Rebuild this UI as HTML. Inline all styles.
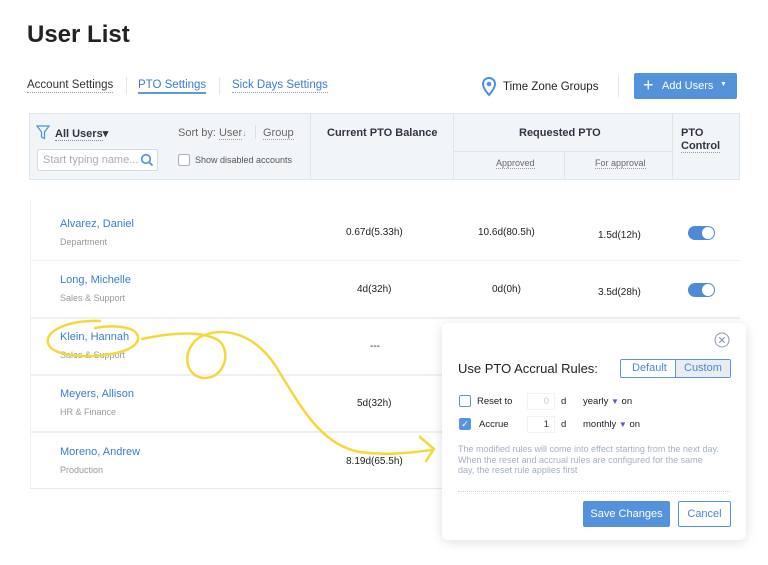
<!DOCTYPE html>
<html><head><meta charset="utf-8"><style>
*{box-sizing:border-box;margin:0;padding:0}
body{width:768px;height:565px;background:#fff;font-family:"Liberation Sans",sans-serif;position:relative;overflow:hidden;color:#333}
.a{position:absolute}
.lnk{color:#3a7bd5}
.t11{font-size:11px}
</style></head><body>
<div class="a" style="left:27px;top:21px;font-size:24px;font-weight:bold;color:#222">User List</div>

<div class="a" style="left:27px;top:79px;font-size:11.5px;color:#333;border-bottom:1px dotted #99a;padding-bottom:1px">Account Settings</div>
<div class="a" style="left:126px;top:77px;width:1px;height:18px;background:#e2e5ea"></div>
<div class="a" style="left:138px;top:79px;font-size:11.5px;color:#3a7bd5;border-bottom:2px solid #5b9be0;padding-bottom:1px">PTO Settings</div>
<div class="a" style="left:219px;top:77px;width:1px;height:18px;background:#e2e5ea"></div>
<div class="a" style="left:232px;top:79px;font-size:11.5px;color:#3a7bd5;border-bottom:1px dotted #7aa6e0;padding-bottom:1px">Sick Days Settings</div>

<svg class="a" style="left:481px;top:77px" width="16" height="20" viewBox="0 0 16 20"><path d="M8 1C4.5 1 2 3.6 2 7c0 4.5 6 11 6 11s6-6.5 6-11c0-3.4-2.5-6-6-6z" fill="none" stroke="#4a90e2" stroke-width="2"/><circle cx="8" cy="7" r="2.3" fill="#4a90e2"/></svg>
<div class="a" style="left:503px;top:81px;font-size:11.5px;color:#222">Time Zone Groups</div>
<div class="a" style="left:618px;top:75px;width:1px;height:22px;background:#e2e5ea"></div>
<div class="a" style="left:634px;top:73px;width:103px;height:26px;background:#5592dc;border-radius:2px;color:#fff;font-size:11px">
<span class="a" style="left:9px;top:2px;font-size:18px;line-height:20px">+</span>
<span class="a" style="left:28px;top:7px">Add Users</span>
<span class="a" style="left:86px;top:8px;font-size:7px">▼</span></div>

<div class="a" style="left:29px;top:113px;width:711px;height:67px;background:#f2f5f8;border:1px solid #e0e5eb"></div>
<div class="a" style="left:310px;top:113px;width:1px;height:67px;background:#e0e5eb"></div>
<div class="a" style="left:453px;top:113px;width:1px;height:67px;background:#e0e5eb"></div>
<div class="a" style="left:672px;top:113px;width:1px;height:67px;background:#e0e5eb"></div>
<div class="a" style="left:453px;top:151px;width:219px;height:1px;background:#e0e5eb"></div>
<div class="a" style="left:564px;top:151px;width:1px;height:29px;background:#e0e5eb"></div>
<svg class="a" style="left:36px;top:125px" width="14" height="15" viewBox="0 0 14 15"><path d="M1 1h12L8.5 7v6.5l-3-1.5V7z" fill="none" stroke="#4a90e2" stroke-width="1.2"/></svg>
<div class="a" style="left:55px;top:127px;font-size:11px;font-weight:bold;color:#334">
<span style="border-bottom:1px dotted #889">All Users</span>▾</div>
<div class="a" style="left:37px;top:149px;width:121px;height:22px;background:#fff;border:1px solid #d3dbe4;border-radius:2px;font-size:11px;color:#aab;padding:4px 5px">Start typing name...</div>
<svg class="a" style="left:140px;top:153px" width="14" height="14" viewBox="0 0 14 14"><circle cx="6" cy="6" r="4.3" fill="none" stroke="#4a90e2" stroke-width="1.6"/><path d="M9 9l3.5 3.5" stroke="#4a90e2" stroke-width="1.8"/></svg>
<div class="a t11" style="left:178px;top:127px;color:#666">Sort by: <span style="border-bottom:1px dotted #99a">User</span><span style="color:#aaa;font-size:9px">↓</span></div>
<div class="a" style="left:255px;top:125px;width:1px;height:14px;background:#dde"></div>
<div class="a t11" style="left:263px;top:127px;color:#666;border-bottom:1px dotted #99a">Group</div>
<div class="a" style="left:178px;top:154px;width:12px;height:12px;border:1px solid #aab;border-radius:2px;background:#fff"></div>
<div class="a" style="left:195px;top:155px;font-size:9px;color:#555">Show disabled accounts</div>
<div class="a t11" style="left:327px;top:127px;font-weight:bold;color:#334">Current PTO Balance</div>
<div class="a t11" style="left:519px;top:127px;font-weight:bold;color:#334">Requested PTO</div>
<div class="a" style="left:496px;top:158px;font-size:9px;color:#666;border-bottom:1px dotted #99a">Approved</div>
<div class="a" style="left:595px;top:158px;font-size:9px;color:#666;border-bottom:1px dotted #99a">For approval</div>
<div class="a t11" style="left:681px;top:127px;font-weight:bold;color:#334;line-height:13px">PTO<br><span style="border-bottom:1px dotted #99a">Control</span></div>

<div class="a" style="left:30px;top:200px;width:1px;height:289px;background:#eef0f3"></div>
<div class="a" style="left:30px;top:488px;width:415px;height:1px;background:#e6e9ee"></div>
<div class="a" style="left:30px;top:260px;width:710px;height:1px;background:#eef0f3"></div>
<div class="a" style="left:30px;top:317px;width:710px;height:2px;background:#eef0f3"></div>
<div class="a" style="left:30px;top:374px;width:415px;height:2px;background:#eef0f3"></div>
<div class="a" style="left:30px;top:431px;width:415px;height:2px;background:#eef0f3"></div>

<div class="a lnk" style="left:60px;top:218px;font-size:11px">Alvarez, Daniel</div>
<div class="a" style="left:60px;top:237px;font-size:9px;color:#999">Department</div>
<div class="a lnk" style="left:60px;top:274px;font-size:11px">Long, Michelle</div>
<div class="a" style="left:60px;top:293px;font-size:9px;color:#999">Sales &amp; Support</div>
<div class="a lnk" style="left:60px;top:331px;font-size:11px">Klein, Hannah</div>
<div class="a" style="left:60px;top:350px;font-size:9px;color:#999">Sales &amp; Support</div>
<div class="a lnk" style="left:60px;top:388px;font-size:11px">Meyers, Allison</div>
<div class="a" style="left:60px;top:407px;font-size:9px;color:#999">HR &amp; Finance</div>
<div class="a lnk" style="left:60px;top:446px;font-size:11px">Moreno, Andrew</div>
<div class="a" style="left:60px;top:465px;font-size:9px;color:#999">Production</div>

<div class="a" style="left:346px;top:227px;font-size:10px;color:#222">0.67d(5.33h)</div>
<div class="a" style="left:357px;top:284px;font-size:10px;color:#222">4d(32h)</div>
<div class="a" style="left:370px;top:341px;font-size:10px;color:#222">---</div>
<div class="a" style="left:357px;top:398px;font-size:10px;color:#222">5d(32h)</div>
<div class="a" style="left:346px;top:456px;font-size:10px;color:#222">8.19d(65.5h)</div>
<div class="a" style="left:478px;top:227px;font-size:10px;color:#222">10.6d(80.5h)</div>
<div class="a" style="left:598px;top:230px;font-size:10px;color:#222">1.5d(12h)</div>
<div class="a" style="left:492px;top:284px;font-size:10px;color:#222">0d(0h)</div>
<div class="a" style="left:598px;top:287px;font-size:10px;color:#222">3.5d(28h)</div>
<div class="a" style="left:688px;top:226px;width:27px;height:14px;border-radius:7px;background:#4f8ad8"><div class="a" style="right:1px;top:1px;width:12px;height:12px;border-radius:50%;background:#fff"></div></div>
<div class="a" style="left:688px;top:283px;width:27px;height:14px;border-radius:7px;background:#4f8ad8"><div class="a" style="right:1px;top:1px;width:12px;height:12px;border-radius:50%;background:#fff"></div></div>

<div class="a" style="left:442px;top:323px;width:304px;height:217px;background:#fff;border-radius:6px;box-shadow:0 2px 12px rgba(0,0,0,0.13)">
<svg class="a" style="left:272px;top:9px" width="16" height="16" viewBox="0 0 16 16"><circle cx="8" cy="8" r="7" fill="none" stroke="#8a99b0" stroke-width="1"/><path d="M5.3 5.3l5.4 5.4M10.7 5.3l-5.4 5.4" stroke="#8a99b0" stroke-width="1.1"/></svg>
<div class="a" style="left:16px;top:38px;font-size:13px;color:#222">Use PTO Accrual Rules:</div>
<div class="a" style="left:178px;top:36px;width:111px;height:19px;border:1px solid #5b95de;border-radius:2px;font-size:11px;color:#4a86d8">
<span class="a" style="left:11px;top:2px">Default</span>
<div class="a" style="left:54px;top:0;width:55px;height:17px;background:#e9edf2;border-left:1px solid #5b95de"></div>
<span class="a" style="left:63px;top:2px">Custom</span></div>
<div class="a" style="left:17px;top:72px;width:12px;height:12px;border:1px solid #5b95de;border-radius:2px"></div>
<div class="a" style="left:35px;top:73px;font-size:9.5px;color:#222">Reset to</div>
<div class="a" style="left:85px;top:70px;width:28px;height:17px;border:1px solid #eef1f5;font-size:9.5px;color:#ccc;text-align:right;padding:2px 5px">0</div>
<div class="a" style="left:119px;top:73px;font-size:9.5px;color:#222">d</div>
<div class="a" style="left:141px;top:73px;font-size:9.5px;color:#222">yearly <span style="color:#6a4fd0;font-size:8px">▼</span> on</div>
<div class="a" style="left:17px;top:95px;width:12px;height:12px;background:#5b95de;border-radius:2px;color:#fff;font-size:9px;line-height:12px;text-align:center">✓</div>
<div class="a" style="left:37px;top:96px;font-size:9.5px;color:#222">Accrue</div>
<div class="a" style="left:85px;top:93px;width:28px;height:17px;border:1px solid #eef1f5;font-size:9.5px;color:#333;text-align:right;padding:2px 5px">1</div>
<div class="a" style="left:119px;top:96px;font-size:9.5px;color:#222">d</div>
<div class="a" style="left:141px;top:96px;font-size:9.5px;color:#222">monthly <span style="color:#6a4fd0;font-size:8px">▼</span> on</div>
<div class="a" style="left:16px;top:121px;width:262px;font-size:9px;line-height:10.5px;color:#a4b0c2">The modified rules will come into effect starting from the next day. When the reset and accrual rules are configured for the same day, the reset rule applies first</div>
<div class="a" style="left:16px;top:168px;width:272px;border-top:1px dotted #c8d2de"></div>
<div class="a" style="left:141px;top:178px;width:87px;height:26px;background:#5592dc;border-radius:2px;color:#fff;font-size:11px;text-align:center;line-height:26px">Save Changes</div>
<div class="a" style="left:236px;top:178px;width:53px;height:26px;border:1px solid #5592dc;border-radius:2px;color:#4a86d8;font-size:11px;text-align:center;line-height:24px">Cancel</div>
</div>

<svg class="a" style="left:0;top:0" width="768" height="565" viewBox="0 0 768 565">
<g fill="none" stroke="#f5d83c" stroke-width="2.5" stroke-linecap="round">
<path d="M100 321C70 320 45 330 48 343C51 355 80 358 105 355C130 352 142 343 137 334C132 326 112 325 95 328"/>
<path d="M142 339C170 333 200 330 218 340C232 350 225 378 205 378C185 378 180 350 200 337C225 325 255 335 275 365C300 405 320 445 360 452C390 456 415 452 432 450"/>
<path d="M420 437L434 449L426 461"/>
</g></svg>
</body></html>
